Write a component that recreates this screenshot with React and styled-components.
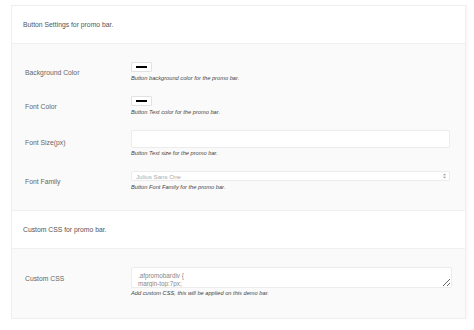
import styled, { createGlobalStyle } from "styled-components";

const GlobalStyle = createGlobalStyle`
  body {
    margin: 0;
    background: #ffffff;
    font-family: "Liberation Sans", Arial, sans-serif;
  }
`;

const Panel = styled.div`
  margin: 5px 0 0 11px;
  width: 453px;
  border: 1px solid #efefef;
  box-shadow: 2px 0 2px rgba(0, 0, 0, 0.03);
`;

const Header = styled.div`
  height: ${(p) => p.h}px;
  display: flex;
  align-items: center;
  padding-left: 11px;
  background: #ffffff;
  border-bottom: 1px solid #f0f0f0;
  font-size: 6.8px;
  color: #555;
`;

const Body = styled.div`
  display: grid;
  grid-template-columns: 106px 1fr;
  row-gap: 14px;
  align-items: center;
  padding: ${(p) => p.pad};
  background: #fafafa;
  border-bottom: ${(p) => (p.last ? "none" : "1px solid #f0f0f0")};
`;

const Label = styled.div`
  font-size: 6.8px;
  color: #666;
  margin-top: ${(p) => p.shift || 0}px;
`;

const Field = styled.div`
  display: flex;
  flex-direction: column;
`;

const Help = styled.div`
  margin-top: ${(p) => p.gap || 3}px;
  font-size: 5.7px;
  line-height: 7px;
  font-style: italic;
  color: #444;
`;

const Swatch = styled.div`
  width: 19px;
  height: 8px;
  display: flex;
  align-items: center;
  justify-content: center;
  background: #fff;
  border: 1px solid #e2e2e2;
  border-radius: 1px;

  span {
    width: 11px;
    height: 2px;
    background: #000;
  }
`;

const TextInput = styled.div`
  width: 317px;
  height: 16px;
  background: #fff;
  border: 1px solid #ececec;
  border-radius: 2px;
`;

const Select = styled.div`
  width: 313px;
  height: 8px;
  padding: 0 0 0 4px;
  display: flex;
  align-items: center;
  justify-content: space-between;
  background: #fff;
  border: 1px solid #ececec;
  border-radius: 2px;
  font-size: 6.2px;
  color: #aaa;

  svg {
    margin-right: 3px;
  }
`;

const Code = styled.textarea`
  box-sizing: border-box;
  width: 321px;
  height: 21px;
  margin: 0;
  padding: 4px 6px 0;
  background: #fff;
  border: 1px solid #ececec;
  border-radius: 2px;
  font-family: "Liberation Sans", Arial, sans-serif;
  font-size: 6.3px;
  line-height: 8px;
  color: #888;
  overflow: hidden;
  outline: none;
`;

const ColorRow = ({ label, help }) => (
  <>
    <Label>{label}</Label>
    <Field>
      <Swatch>
        <span />
      </Swatch>
      <Help>{help}</Help>
    </Field>
  </>
);

export default function App() {
  return (
    <>
      <GlobalStyle />
      <Panel>
        <Header h={37}>Button Settings for promo bar.</Header>
        <Body pad="18px 13px 19px 13px">
          <ColorRow
            label="Background Color"
            help="Button background color for the promo bar."
          />
          <ColorRow
            label="Font Color"
            help="Button Text color for the promo bar."
          />
          <Label shift={-3}>Font Size(px)</Label>
          <Field>
            <TextInput />
            <Help gap={2}>Button Text size for the promo bar.</Help>
          </Field>
          <Label>Font Family</Label>
          <Field>
            <Select>
              Julius Sans One
              <svg width="3" height="6" viewBox="0 0 3 6">
                <path d="M0 2.2 L1.5 0.5 L3 2.2 Z M0 3.8 L1.5 5.5 L3 3.8 Z" fill="#999" />
              </svg>
            </Select>
            <Help gap={3}>Button Font Family for the promo bar.</Help>
          </Field>
        </Body>
        <Header h={37}>Custom CSS for promo bar.</Header>
        <Body pad="18px 13px 21px 13px" last>
          <Label shift={-7}>Custom CSS</Label>
          <Field>
            <Code
              readOnly
              defaultValue={".afpromobardiv {\nmargin-top:7px;\n}"}
            />
            <Help gap={2}>
              Add custom CSS, this will be applied on this demo bar.
            </Help>
          </Field>
        </Body>
      </Panel>
    </>
  );
}
